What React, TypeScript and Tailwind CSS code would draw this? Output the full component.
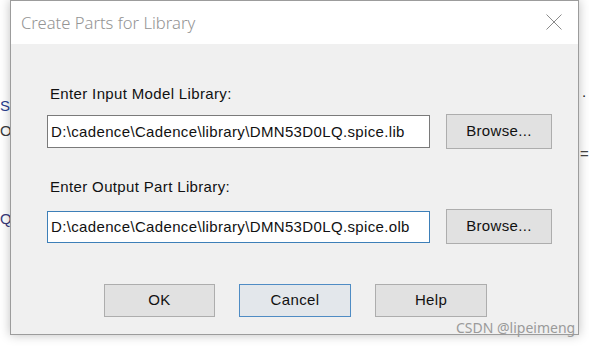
import React from "react";

export default function App() {
  const body = { fontFamily: '"Liberation Sans", Arial, sans-serif', letterSpacing: "0.35px" };
  return (
    <div className="relative w-[589px] h-[346px] bg-white overflow-hidden" style={body}>
      {/* background glyphs behind the dialog */}
      <span className="absolute left-0 top-[98px] text-[15px] leading-none text-[#2a3f8f]">S</span>
      <span className="absolute left-0 top-[123px] text-[15px] leading-none text-[#3a3a3a]">O</span>
      <span className="absolute left-0 top-[211px] text-[15px] leading-none text-[#3a3a7a]">Q</span>
      <span className="absolute left-[582px] top-[84px] text-[15px] leading-none text-[#222]">.</span>
      <span className="absolute left-[580px] top-[146px] text-[15px] leading-none text-[#444]">=</span>

      <div className="relative ml-[10px] w-[569px] h-[335px] flex flex-col border border-[#9c9c9c] bg-[#f0f0f0] shadow-[0_0_10px_rgba(0,0,0,0.25)]">
        {/* title bar */}
        <div className="h-[43px] bg-white flex items-center justify-between pl-[10px] pr-[16px]">
          <span
            className="text-[16.6px] text-[#949494] leading-none pt-[1px]"
            style={{ fontFamily: '"Noto Sans", "Open Sans", sans-serif', fontWeight: 300, letterSpacing: "0px" }}
          >
            Create Parts for Library
          </span>
          <svg width="16" height="16" viewBox="0 0 16 16" className="mb-[1px]">
            <path d="M0.5 0.5 L15.5 15.5 M15.5 0.5 L0.5 15.5" stroke="#8a8a8a" strokeWidth="1" fill="none" />
          </svg>
        </div>

        {/* body */}
        <div className="flex flex-col pl-[36px] text-[15px] text-[#111]">
          <div className="mt-[41px] h-[17px] leading-[17px] pl-[3px]">Enter Input Model Library:</div>
          <div className="mt-[12px] flex items-center">
            <div className="w-[383px] h-[33px] border border-[#7a7a7a] bg-white flex items-center pl-[3px] leading-none">
              D:\cadence\Cadence\library\DMN53D0LQ.spice.lib
            </div>
            <div className="ml-[16px] w-[106px] h-[35px] border border-[#adadad] bg-[#e1e1e1] flex items-center justify-center">
              Browse...
            </div>
          </div>

          <div className="mt-[29px] h-[17px] leading-[17px] pl-[3px]">Enter Output Part Library:</div>
          <div className="mt-[14px] flex items-center">
            <div className="w-[383px] h-[32px] border border-[#3d7fb8] bg-white flex items-center pl-[3px] leading-none">
              D:\cadence\Cadence\library\DMN53D0LQ.spice.olb
            </div>
            <div className="ml-[16px] w-[106px] h-[35px] border border-[#adadad] bg-[#e1e1e1] flex items-center justify-center">
              Browse...
            </div>
          </div>

          <div className="mt-[40px] ml-[57px] flex gap-[24px]">
            <div className="w-[111px] h-[33px] border border-[#adadad] bg-[#e1e1e1] flex items-center justify-center">OK</div>
            <div className="w-[112px] h-[33px] border border-[#4f8cc4] bg-[#e3e7eb] flex items-center justify-center">Cancel</div>
            <div className="w-[112px] h-[33px] border border-[#adadad] bg-[#e1e1e1] flex items-center justify-center">Help</div>
          </div>
        </div>
      </div>

      {/* watermark */}
      <span
        className="absolute left-[456px] top-[321px] text-[14px] leading-none text-[#9a9a9a]"
        style={{ fontFamily: '"Noto Sans", sans-serif', letterSpacing: "0px" }}
      >
        CSDN @lipeimeng
      </span>
    </div>
  );
}
